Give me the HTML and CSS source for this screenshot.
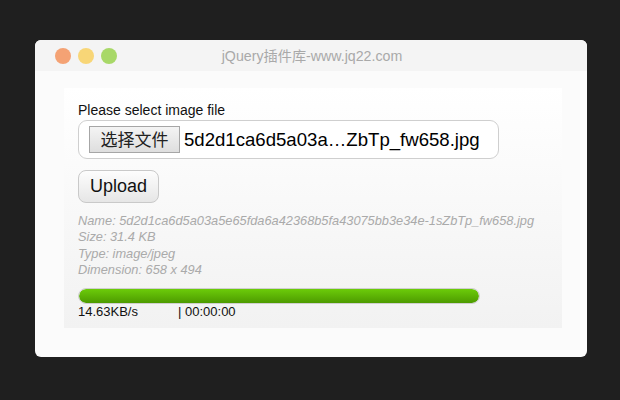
FILE: index.html
```html
<!DOCTYPE html>
<html>
<head>
<meta charset="utf-8">
<link rel="stylesheet" href="styles.css">
</head>
<body>
<div class="window">
  <div class="titlebar">
    <div class="lights">
      <span class="dot red"></span>
      <span class="dot yellow"></span>
      <span class="dot green"></span>
    </div>
    <div class="title">jQuery插件库-www.jq22.com</div>
  </div>
  <div class="content">
    <div class="panel">
      <div class="label">Please select image file</div>
      <div class="filebox">
        <span class="choose">选择文件</span>
        <span class="fname">5d2d1ca6d5a03a…ZbTp_fw658.jpg</span>
      </div>
      <div class="upload">Upload</div>
      <div class="info">
        <div>Name: 5d2d1ca6d5a03a5e65fda6a42368b5fa43075bb3e34e-1sZbTp_fw658.jpg</div>
        <div>Size: 31.4 KB</div>
        <div>Type: image/jpeg</div>
        <div>Dimension: 658 x 494</div>
      </div>
      <div class="progress"><div class="fill"></div></div>
      <div class="speed"><span class="rate">14.63KB/s</span><span>| 00:00:00</span></div>
    </div>
  </div>
</div>
</body>
</html>
```
FILE: styles.css
```css
html, body {
  margin: 0;
  padding: 0;
  background: #1f1f1f;
  font-family: "Liberation Sans", Arial, "Noto Sans CJK SC", sans-serif;
}
.window {
  margin: 40px 0 0 35px;
  width: 552px;
  height: 317px;
  background: #fbfbfb;
  border-radius: 6px;
  overflow: hidden;
  display: flex;
  flex-direction: column;
}
.titlebar {
  height: 31px;
  background: #f4f4f4;
  display: flex;
  align-items: center;
  position: relative;
}
.lights {
  display: flex;
  gap: 7px;
  padding-left: 20px;
  padding-top: 1px;
}
.dot {
  width: 16px;
  height: 16px;
  border-radius: 50%;
  display: block;
}
.red { background: #f4a274; }
.yellow { background: #f8d677; }
.green { background: #a8d868; }
.title {
  position: absolute;
  left: 0;
  right: 0;
  top: 7px;
  text-align: center;
  color: #a9a9a9;
  font-size: 14.2px;
  line-height: 18px;
  font-family: "Liberation Sans", "Noto Sans CJK SC", sans-serif;
  padding-left: 2px;
}
.content {
  flex: 1;
  padding: 17px 25px 29px 29px;
}
.panel {
  height: 100%;
  box-sizing: border-box;
  background: linear-gradient(#ffffff, #f2f2f2);
  padding: 15px 14px 0 14px;
}
.label {
  font-size: 14px;
  line-height: 15px;
  color: #111;
}
.filebox {
  margin-top: 2px;
  width: 421px;
  height: 39px;
  box-sizing: border-box;
  border: 1px solid #cfcfcf;
  border-radius: 9px;
  display: flex;
  align-items: center;
  padding-left: 10px;
  background: #fff;
}
.choose {
  width: 91px;
  height: 27px;
  box-sizing: border-box;
  border: 1px solid #a6a6a6;
  background: linear-gradient(#f4f4f4, #dedede);
  font-family: "Noto Sans CJK SC", sans-serif;
  font-size: 17px;
  line-height: 24px;
  text-align: center;
  color: #222;
}
.fname {
  margin-left: 4px;
  font-size: 18.6px;
  color: #000;
  white-space: nowrap;
}
.upload {
  margin-top: 11px;
  width: 81px;
  height: 33px;
  box-sizing: border-box;
  border: 1px solid #c9c9c9;
  border-radius: 8px;
  background: linear-gradient(#fdfdfd, #e6e6e6);
  font-size: 18px;
  line-height: 31px;
  text-align: center;
  color: #111;
}
.info {
  margin-top: 10px;
  font-size: 12.8px;
  line-height: 16.3px;
  font-style: italic;
  color: #aaaaaa;
  white-space: nowrap;
}
.progress {
  margin-top: 10px;
  width: 402px;
  height: 16px;
  box-sizing: border-box;
  border: 1px solid #cfcfcf;
  border-radius: 8px;
  overflow: hidden;
  background: #eee;
}
.fill {
  width: 100%;
  height: 100%;
  background: linear-gradient(#6ccc0a, #4d9b00);
  border-radius: 8px;
}
.speed {
  font-size: 13px;
  line-height: 15px;
  color: #111;
  display: flex;
}
.rate {
  width: 100px;
}
```
